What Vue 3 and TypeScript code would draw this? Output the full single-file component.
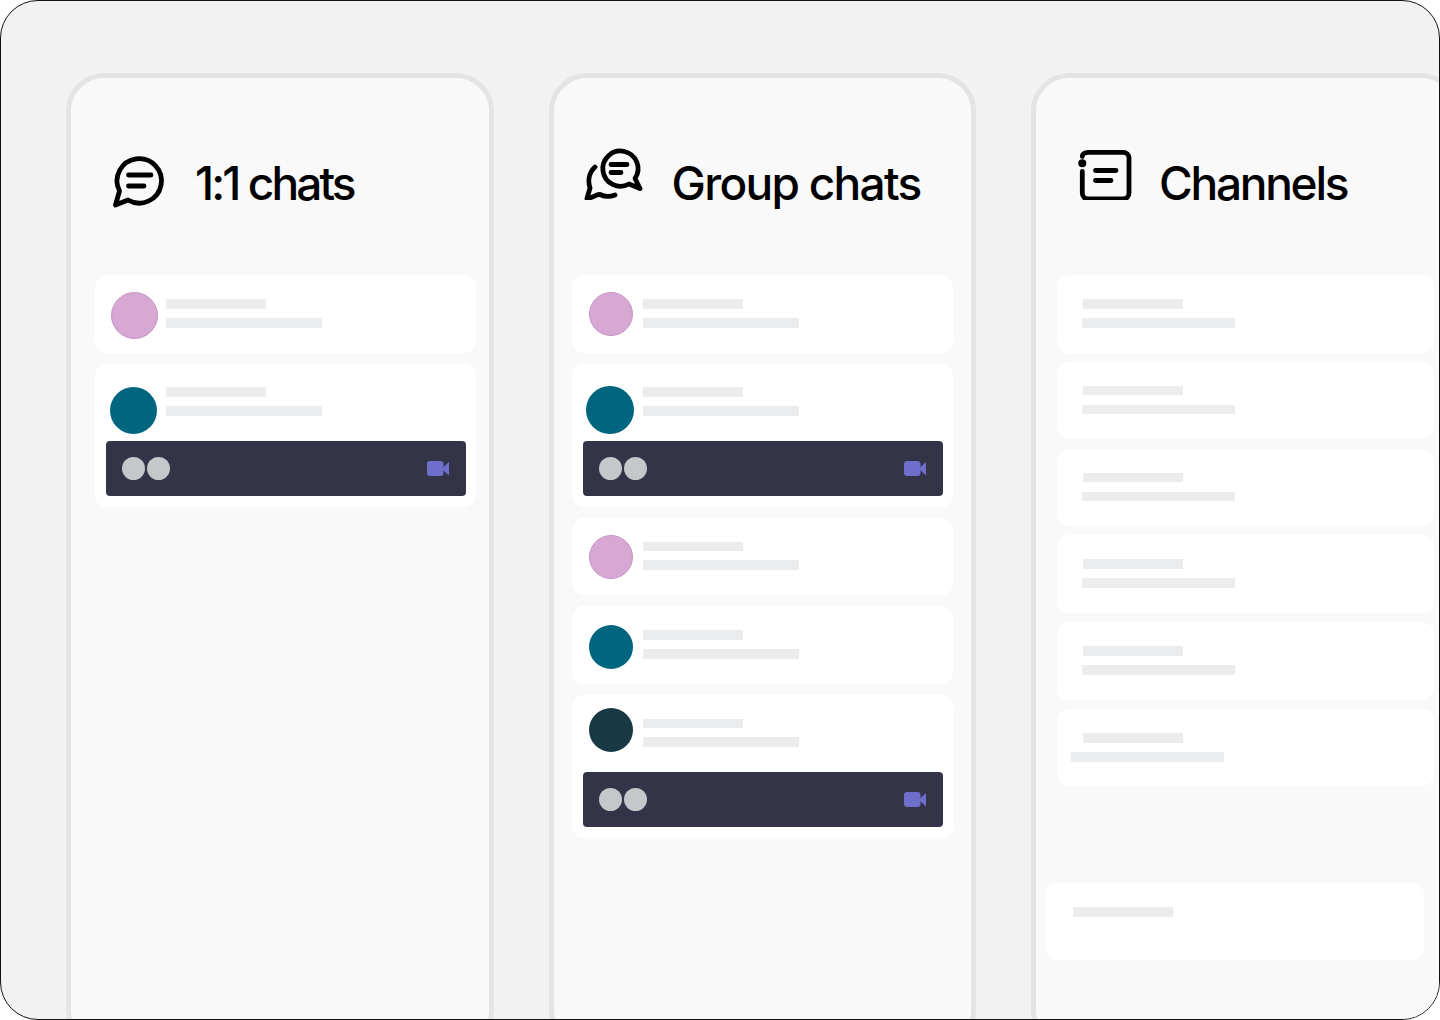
<script setup lang="ts">
interface Avatar { x: number; y: number; size: number; tone: 'pink' | 'teal' | 'ink' }
interface Card { top?: number; second?: number; first?: number; w2?: number; avatar?: Avatar; call?: boolean; single?: boolean }
interface Column { key: 'one' | 'group' | 'channels'; title: string; cards: Card[] }

const columns: Column[] = [
  {
    key: 'one',
    title: '1:1 chats',
    cards: [
      { avatar: { x: 16, y: 17, size: 47, tone: 'pink' } },
      { top: 23.5, avatar: { x: 15, y: 23.5, size: 47, tone: 'teal' }, call: true },
    ],
  },
  {
    key: 'group',
    title: 'Group chats',
    cards: [
      { avatar: { x: 17, y: 17, size: 44, tone: 'pink' } },
      { top: 23.5, avatar: { x: 14, y: 22.5, size: 48, tone: 'teal' }, call: true },
      { avatar: { x: 17, y: 17, size: 44, tone: 'pink' } },
      { avatar: { x: 17, y: 18.5, size: 44, tone: 'teal' } },
      { avatar: { x: 17, y: 13, size: 44, tone: 'ink' }, call: true },
    ],
  },
  {
    key: 'channels',
    title: 'Channels',
    cards: [
      { first: 26, second: 25, w2: 153 },
      { first: 26, second: 25, w2: 153 },
      { first: 26, second: 25, w2: 153 },
      { first: 26, second: 25, w2: 153 },
      { first: 26, second: 25, w2: 153 },
      { first: 26, second: 14, w2: 153 },
      { first: 27, single: true },
    ],
  },
]
</script>

<template>
  <div class="frame">
    <section v-for="col in columns" :key="col.key" class="column" :class="col.key">
      <header class="head">
        <svg v-if="col.key === 'one'" class="icon" width="85" height="60" viewBox="110 152 85 60" fill="none" stroke="#000" stroke-width="4.8" stroke-linecap="round" stroke-linejoin="round">
          <path d="M119.5 191A22.2 22.2 0 1 1 128 200L115.5 205Z" />
          <path d="M128.5 175H151M128.5 186H144" />
        </svg>
        <svg v-else-if="col.key === 'group'" class="icon" width="89" height="60" viewBox="583 140 89 60" fill="none" stroke="#000" stroke-width="4.8" stroke-linecap="round" stroke-linejoin="round">
          <path d="M629 184A17.6 17.6 0 1 1 635 178.5L640 188.500Z" />
          <path d="M611 164.5H627M611 172.5H621" />
          <path d="M595 167C589.500 172 587.500 180 590 188L587 198.500C592 198.500 596 194 600 194.500C605 197 610 197 615 195" />
        </svg>
        <svg v-else class="icon" width="82" height="60" viewBox="1077 140 82 60" fill="none" stroke="#000" stroke-width="4.8" stroke-linecap="round" stroke-linejoin="round">
          <path d="M1082.300 156.500C1082.300 154 1085 152.300 1088 152.300H1123C1126.500 152.300 1129 155 1129 158V193C1129 196.500 1126.500 199 1123 199H1088C1085 199 1082.300 196.500 1082.300 193V171.500" />
          <circle cx="1082.300" cy="163.300" r="4" fill="#000" stroke="none" />
          <path d="M1095.500 170.500H1116M1095.500 180.500H1111" />
        </svg>
        <h2 class="title">{{ col.title }}</h2>
      </header>

      <div class="list">
        <article v-for="(card, i) in col.cards" :key="i" class="card" :class="{ last: card.single }">
          <div class="row">
            <span
              v-if="card.avatar"
              class="avatar"
              :class="card.avatar.tone"
              :style="{ left: card.avatar.x + 'px', top: card.avatar.y + 'px', width: card.avatar.size + 'px', height: card.avatar.size + 'px' }"
            ></span>
            <div class="lines" :style="{ paddingTop: (card.top ?? 24) + 'px' }">
              <i class="line short" :style="{ marginLeft: (card.first ?? 71.3) + 'px' }"></i>
              <i v-if="!card.single" class="line long" :style="{ marginLeft: (card.second ?? 71.3) + 'px', width: (card.w2 ?? 156) + 'px' }"></i>
            </div>
          </div>
          <div v-if="card.call" class="call">
            <span class="dots"><b></b><b></b></span>
            <svg width="22" height="15" viewBox="0 0 22 15"><rect width="16.500" height="15" rx="3" fill="#6e6fcb" /><path d="M16 6.500 22 1V14.500L16 9Z" fill="#6e6fcb" /></svg>
          </div>
        </article>
      </div>
    </section>
  </div>
</template>

<style scoped>
.frame {
  box-sizing: border-box;
  width: 1440px;
  height: 1020px;
  padding: 72px 0 0 65px;
  display: flex;
  gap: 55px;
  overflow: hidden;
  background: #f2f2f2;
  border: 1px solid #111;
  border-radius: 38px;
}
.column {
  flex: none;
  box-sizing: border-box;
  width: 427.5px;
  height: 975px;
  background: #f9f9f9;
  border: 5px solid #e4e4e4;
  border-radius: 38px;
}
.head {
  display: flex;
  align-items: center;
  height: 197px;
  padding-top: 11px;
  box-sizing: border-box;
}
.one .head { padding-left: 39px; }
.group .head { padding-left: 29px; }
.channels .head { padding-left: 41px; }
.group .icon, .channels .icon { margin-top: -24px; }
.icon { flex: none; }
.title {
  margin: 2px 0 0;
  font: 500 46px/60px Inter, "Liberation Sans", sans-serif;
  color: #000;
  white-space: nowrap;
}
.one .title { letter-spacing: -2.9px; }
.group .title { letter-spacing: -1.7px; }
.channels .title { letter-spacing: -2.25px; }
.list { display: flex; flex-direction: column; gap: 11px; }
.one .list { margin-left: 24px; }
.group .list { margin-left: 18px; }
.channels .list { margin-left: 21px; gap: 9.3px; }
.card {
  width: 381px;
  flex: none;
  background: #fff;
  border-radius: 12px;
}
.channels .card { width: 377px; }
.channels .card.last { width: 378px; height: 77.5px; margin: 87.2px 0 0 -11px; }
.row { position: relative; height: 77.5px; }
.card:has(.call) .row { height: 77px; }
.avatar { position: absolute; box-sizing: border-box; border-radius: 50%; }
.pink { background: #d7a8d3; border: 1px solid #c795c3; }
.teal { background: #006680; }
.ink { background: #183843; }
.lines { display: flex; flex-direction: column; gap: 9.300px; }
.line { display: block; height: 9.700px; background: #ebecee; }
.short { width: 100px; }
.call {
  box-sizing: border-box;
  display: flex;
  align-items: center;
  justify-content: space-between;
  width: 360px;
  height: 55px;
  margin: 0 0 11px 11px;
  padding: 0 17px 0 16px;
  background: #343448;
  border-radius: 4px;
}
.dots { display: flex; gap: 2px; }
.dots b { width: 23px; height: 23px; border-radius: 50%; background: #c6c7cb; }
</style>
